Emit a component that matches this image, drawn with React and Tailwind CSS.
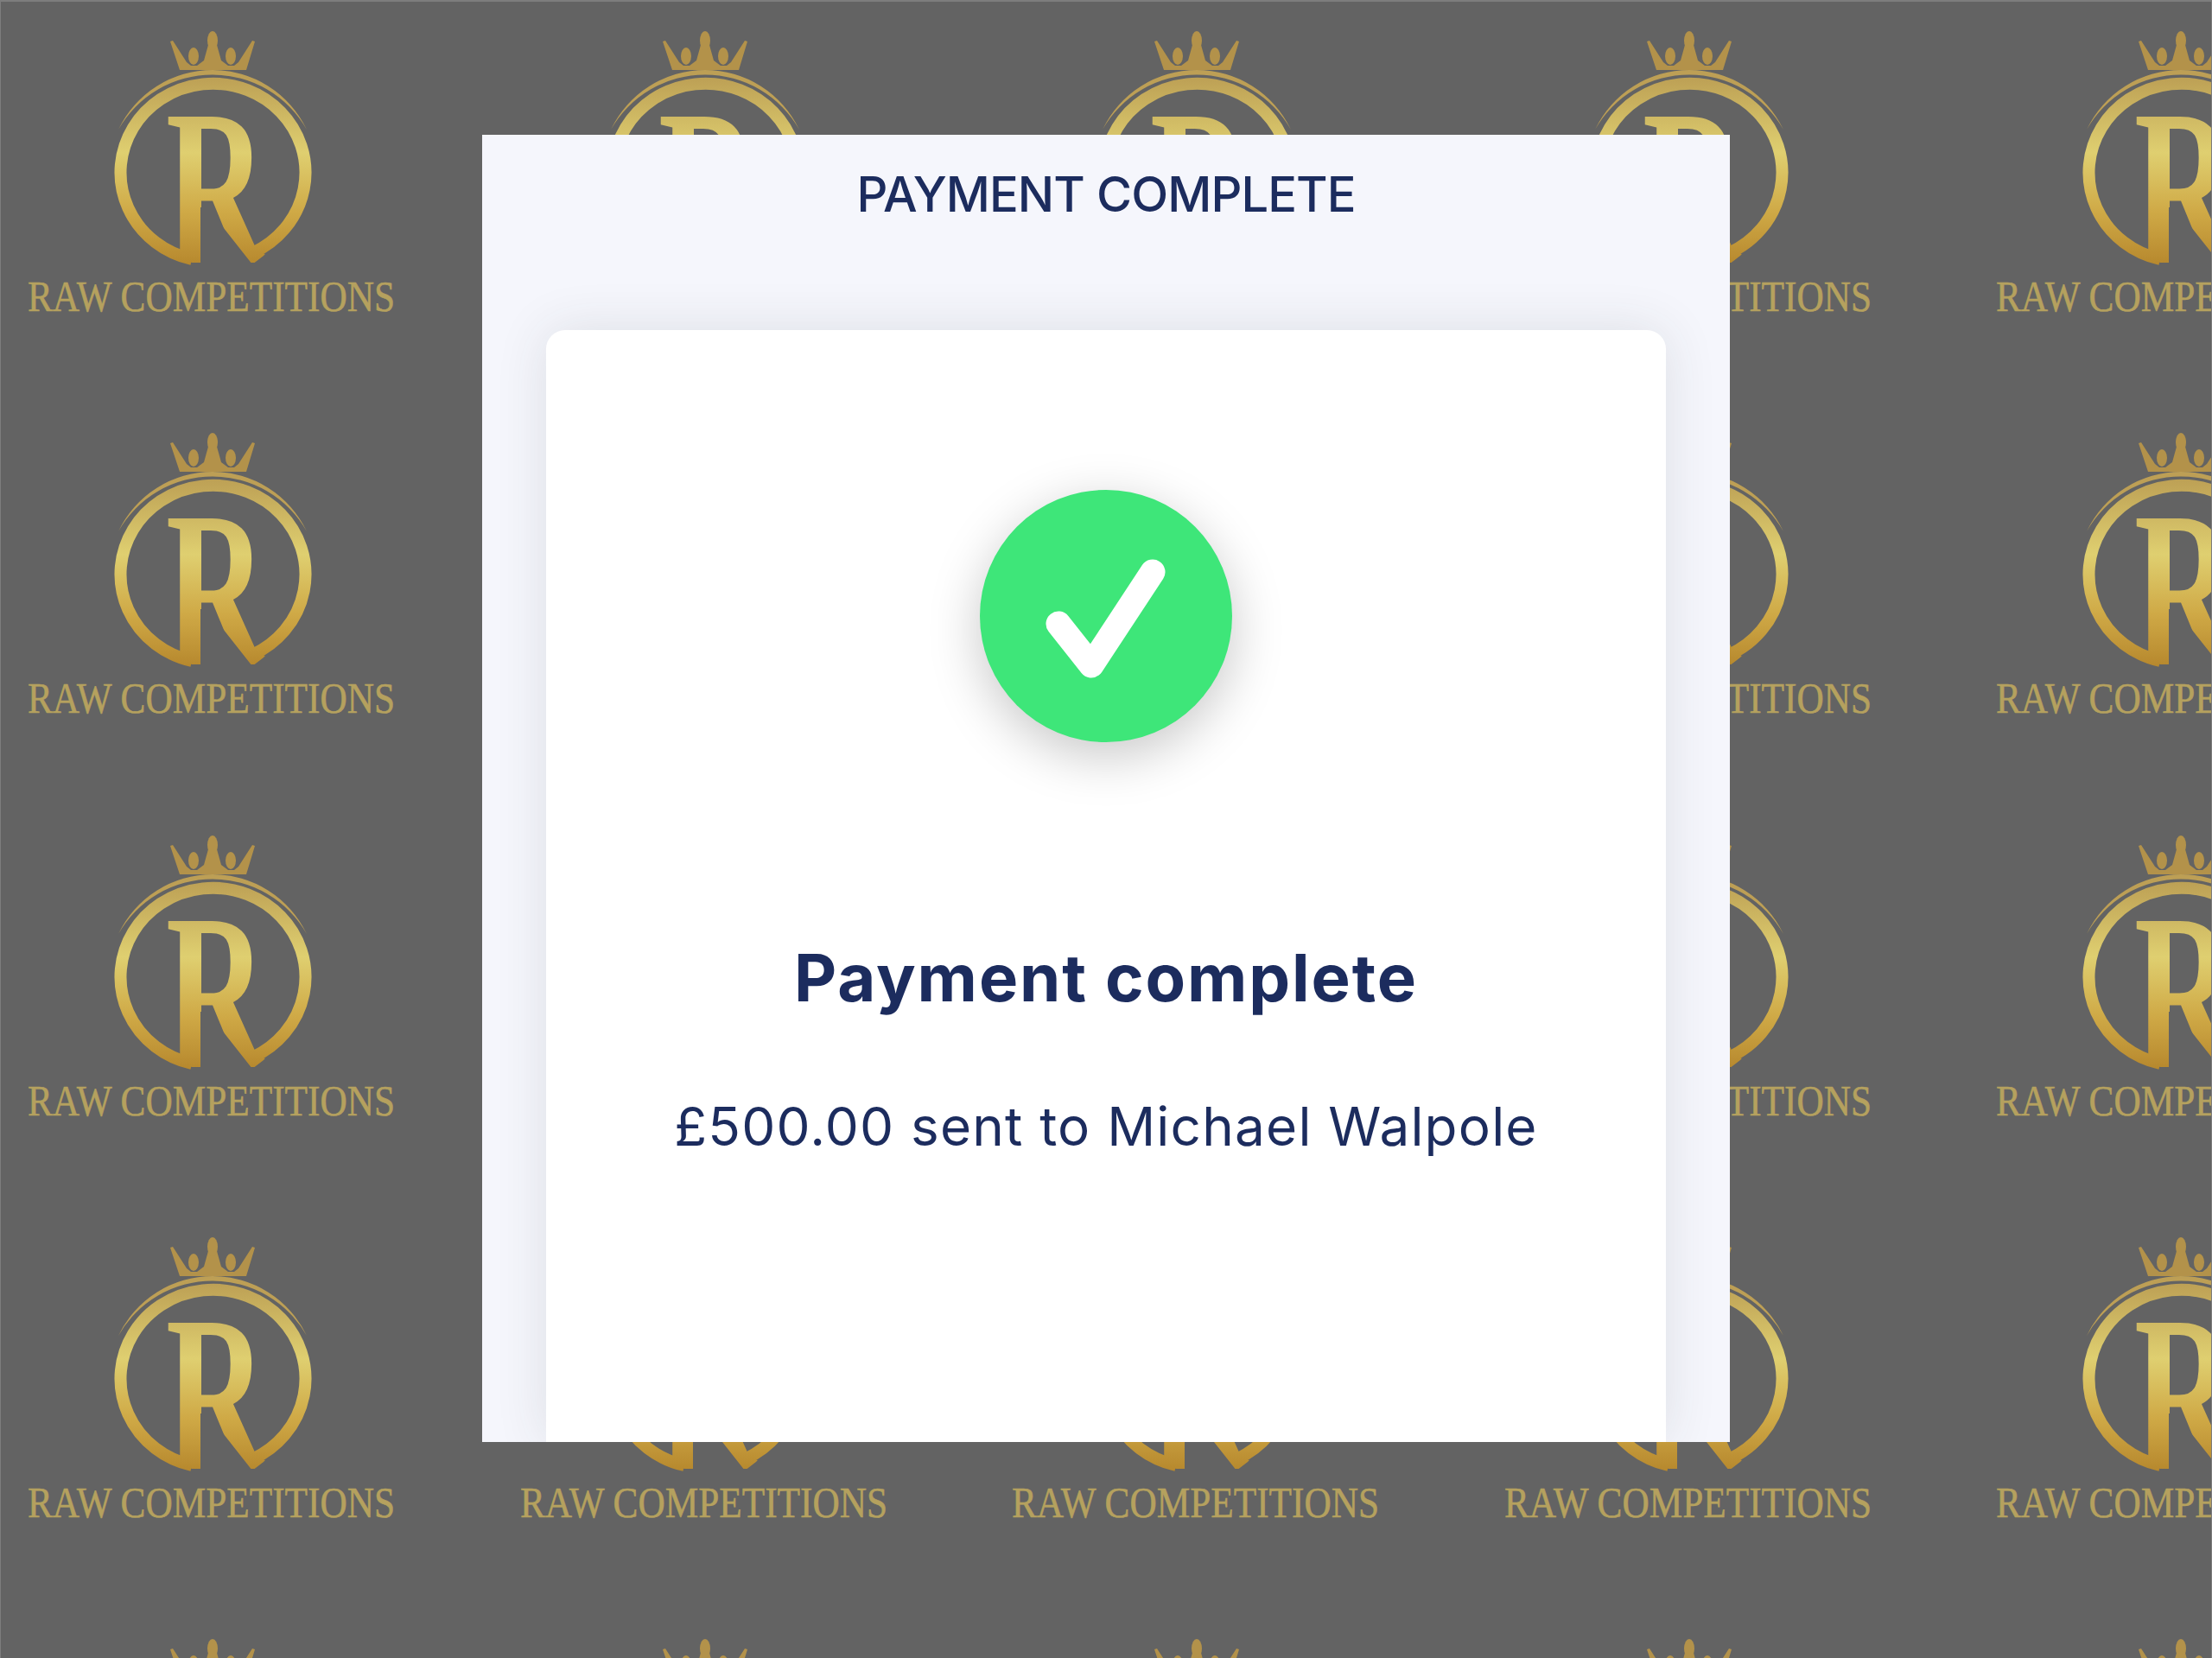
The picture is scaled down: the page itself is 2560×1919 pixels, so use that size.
const tiles = Array.from({ length: 25 }, (_, i) => i);

function Logo() {
  return (
    <svg viewBox="0 0 569.5 465.25" className="block h-[465.25px] w-[569.5px]">
      <defs>
        <linearGradient id="gold" gradientUnits="userSpaceOnUse" x1="0" y1="80" x2="0" y2="310">
          <stop offset="0" stopColor="#b99b52" />
          <stop offset="0.42" stopColor="#dfcf70" />
          <stop offset="0.72" stopColor="#cfa946" />
          <stop offset="1" stopColor="#b5862c" />
        </linearGradient>
        <clipPath id="monogram">
          <polygon points="180,120 330,120 330,270 305,296 292,306 240,240 232,240 232,308 207,298 207,170 180,170" />
        </clipPath>
      </defs>
      <g fill="#b3924a">
        <path d="M208 81 L197 48 L200 47 L216 72 L221 76 L228 76 L236 70 L241 52 L251 52 L256 70 L264 76 L271 76 L276 72 L292 47 L295 48 L285 81 Z" />
        <ellipse cx="246" cy="47" rx="6" ry="11" />
        <ellipse cx="224" cy="65" rx="6" ry="10" />
        <ellipse cx="267" cy="65" rx="6" ry="10" />
      </g>
      <path d="M137 150 A120.6 120.6 0 0 1 355 150 A125.3 125.3 0 0 0 137 150 Z" fill="#bd9f55" />
      <path d="M222 300 A107 103 0 1 1 293 292.5" fill="none" stroke="url(#gold)" strokeWidth="14" />
      <text
        x="192"
        y="304"
        fontFamily="'Liberation Serif', serif"
        fontWeight="700"
        fontSize="258"
        fill="url(#gold)"
        textLength="116"
        lengthAdjust="spacingAndGlyphs"
        clipPath="url(#monogram)"
      >
        R
      </text>
      <text
        x="32"
        y="360"
        fontFamily="'Liberation Serif', serif"
        fontSize="50"
        fill="#b5a15e"
        stroke="#b5a15e"
        strokeWidth="0.6"
        textLength="425"
        lengthAdjust="spacingAndGlyphs"
      >
        RAW COMPETITIONS
      </text>
    </svg>
  );
}

export default function App() {
  return (
    <div className="relative h-[1919px] w-[2560px] overflow-hidden bg-[#636363] font-['Inter',sans-serif] text-[#1c2c5e]">
      <div className="absolute inset-0 grid grid-cols-[repeat(5,569.5px)] auto-rows-[465.25px]">
        {tiles.map((t) => (
          <Logo key={t} />
        ))}
      </div>
      <div className="absolute inset-0 border-t-2 border-l border-r border-[#7d7d7d]" />
      <div className="relative flex justify-center pt-[156px]">
        <div className="flex h-[1513px] w-[1444px] flex-col items-center overflow-hidden bg-[#f5f6fc]">
          <h1 className="mt-[35px] text-[56px] leading-[68px] font-medium tracking-[-0.9px]">PAYMENT COMPLETE</h1>
          <div className="mt-[123px] flex w-[1296px] flex-1 flex-col items-center rounded-t-[22px] bg-white shadow-[0_0_60px_rgba(50,55,60,0.12)]">
            <div className="mt-[185px] flex h-[292px] w-[292px] items-center justify-center rounded-full bg-[#3ee679] shadow-[0_16px_60px_rgba(0,0,0,0.22)]">
              <svg viewBox="0 0 292 292" className="h-[292px] w-[292px]">
                <path d="M91 155 L129 203 L200 95" fill="none" stroke="#ffffff" strokeWidth="29" strokeLinecap="round" strokeLinejoin="round" />
              </svg>
            </div>
            <h2 className="mt-[230px] text-[76px] leading-[84px] font-bold tracking-[1.9px]">Payment complete</h2>
            <p className="mt-[95px] text-[62px] leading-[72px] font-normal tracking-[1.2px]">£500.00 sent to Michael Walpole</p>
          </div>
        </div>
      </div>
    </div>
  );
}
